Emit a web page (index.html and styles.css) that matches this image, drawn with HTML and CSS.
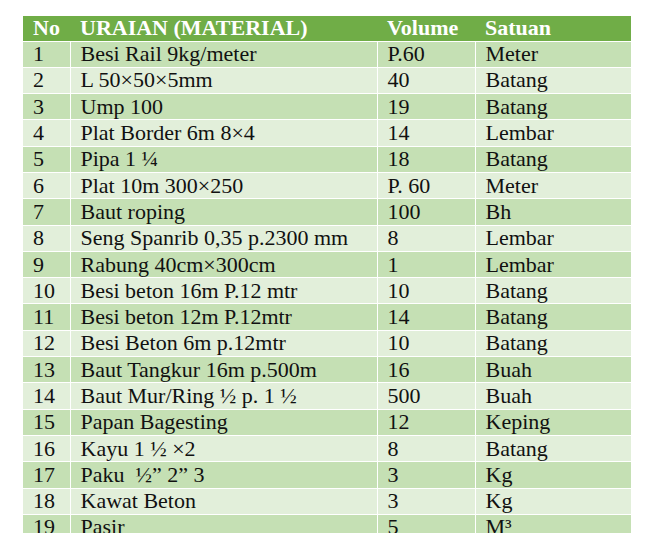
FILE: index.html
```html
<!DOCTYPE html>
<html lang="id">
<head>
<meta charset="utf-8">
<title>Material</title>
<link rel="stylesheet" href="styles.css">
</head>
<body>
<div class="page">
<table class="mat">
<colgroup>
<col class="c-no"><col class="c-ur"><col class="c-vol"><col class="c-sat">
</colgroup>
<thead>
<tr><th>No</th><th>URAIAN (MATERIAL)</th><th>Volume</th><th>Satuan</th></tr>
</thead>
<tbody>
<tr><td>1</td><td>Besi Rail 9kg/meter</td><td>P.60</td><td>Meter</td></tr>
<tr><td>2</td><td>L 50×50×5mm</td><td>40</td><td>Batang</td></tr>
<tr><td>3</td><td>Ump 100</td><td>19</td><td>Batang</td></tr>
<tr><td>4</td><td>Plat Border 6m 8×4</td><td>14</td><td>Lembar</td></tr>
<tr><td>5</td><td>Pipa 1 ¼</td><td>18</td><td>Batang</td></tr>
<tr><td>6</td><td>Plat 10m 300×250</td><td>P. 60</td><td>Meter</td></tr>
<tr><td>7</td><td>Baut roping</td><td>100</td><td>Bh</td></tr>
<tr><td>8</td><td>Seng Spanrib 0,35 p.2300 mm</td><td>8</td><td>Lembar</td></tr>
<tr><td>9</td><td>Rabung 40cm×300cm</td><td>1</td><td>Lembar</td></tr>
<tr><td>10</td><td>Besi beton 16m P.12 mtr</td><td>10</td><td>Batang</td></tr>
<tr><td>11</td><td>Besi beton 12m P.12mtr</td><td>14</td><td>Batang</td></tr>
<tr><td>12</td><td>Besi Beton 6m p.12mtr</td><td>10</td><td>Batang</td></tr>
<tr><td>13</td><td>Baut Tangkur 16m p.500m</td><td>16</td><td>Buah</td></tr>
<tr><td>14</td><td>Baut Mur/Ring ½ p. 1 ½</td><td>500</td><td>Buah</td></tr>
<tr><td>15</td><td>Papan Bagesting</td><td>12</td><td>Keping</td></tr>
<tr><td>16</td><td>Kayu 1 ½ ×2</td><td>8</td><td>Batang</td></tr>
<tr><td>17</td><td>Paku &nbsp;½” 2” 3</td><td>3</td><td>Kg</td></tr>
<tr><td>18</td><td>Kawat Beton</td><td>3</td><td>Kg</td></tr>
<tr><td>19</td><td>Pasir</td><td>5</td><td>M³</td></tr>
</tbody>
</table>
</div>
</body>
</html>
```

FILE: styles.css
```css
html, body {
  margin: 0;
  padding: 0;
  background: #ffffff;
}
.page {
  padding: 16px 0 0 23px;
}
.mat {
  border-collapse: collapse;
  table-layout: fixed;
  width: 608px;
  font-family: "Liberation Serif", "Times New Roman", serif;
  font-size: 22px;
  color: #111;
}
.c-no { width: 47px; }
.c-ur { width: 307px; }
.c-vol { width: 98px; }
.c-sat { width: 156px; }
.mat th, .mat td {
  text-align: left;
  padding: 0 0 0 10px;
  white-space: nowrap;
  line-height: 22px;
  border: 1.5px solid #ffffff;
}
.mat thead tr { height: 25px; }
.mat tbody tr { height: 26.3px; }
.mat thead th {
  background: #70ad47;
  color: #ffffff;
  font-weight: bold;
  border-top: none;
  border-left: none;
  border-right: none;
}
.mat tbody tr:nth-child(odd) td { background: #c5e0b4; }
.mat tbody tr:nth-child(even) td { background: #e2efda; }
.mat tr > :first-child { border-left: none; }
.mat tr > :last-child { border-right: none; }
```
